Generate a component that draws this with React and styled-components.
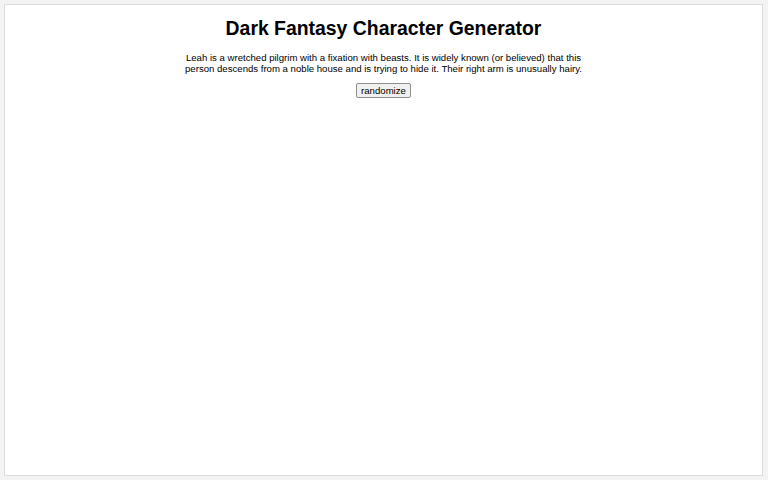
import React, { useState } from "react";
import styled, { createGlobalStyle } from "styled-components";

const GlobalStyle = createGlobalStyle`
  html, body {
    margin: 0;
    padding: 0;
    height: 100%;
    background: #f3f3f3;
  }
  body {
    font-family: "Liberation Sans", Arial, sans-serif;
    color: #000;
  }
  #root {
    height: 100%;
  }
`;

const Page = styled.div`
  box-sizing: border-box;
  height: 100%;
  padding: 4px 5px 4px 4px;
`;

const Card = styled.main`
  box-sizing: border-box;
  height: 100%;
  background: #fff;
  border: 1px solid #dcdcdc;
  display: flex;
  flex-direction: column;
  align-items: center;
  padding-top: 12px;
`;

const Title = styled.h1`
  margin: 0;
  font-size: 19.4px;
  font-weight: bold;
  line-height: 23px;
`;

const Blurb = styled.p`
  margin: 12px 0 0 0;
  max-width: 400px;
  font-size: 9.6px;
  line-height: 11px;
  text-align: center;
`;

const Button = styled.button`
  margin-top: 9px;
  height: 15px;
  font-family: "Liberation Sans", Arial, sans-serif;
  font-size: 9.6px;
  line-height: 11px;
  padding: 0 4px;
  background: #f0f0f0;
  border: 1px solid #8f8f8f;
  border-radius: 2px;
  color: #000;
  cursor: pointer;
`;

const characters = [
  "Leah is a wretched pilgrim with a fixation with beasts. It is widely known (or believed) that this person descends from a noble house and is trying to hide it. Their right arm is unusually hairy.",
];

export default function App() {
  const [idx, setIdx] = useState(0);
  return (
    <>
      <GlobalStyle />
      <Page>
        <Card>
          <Title>Dark Fantasy Character Generator</Title>
          <Blurb>{characters[idx]}</Blurb>
          <Button onClick={() => setIdx((i) => (i + 1) % characters.length)}>
            randomize
          </Button>
        </Card>
      </Page>
    </>
  );
}
